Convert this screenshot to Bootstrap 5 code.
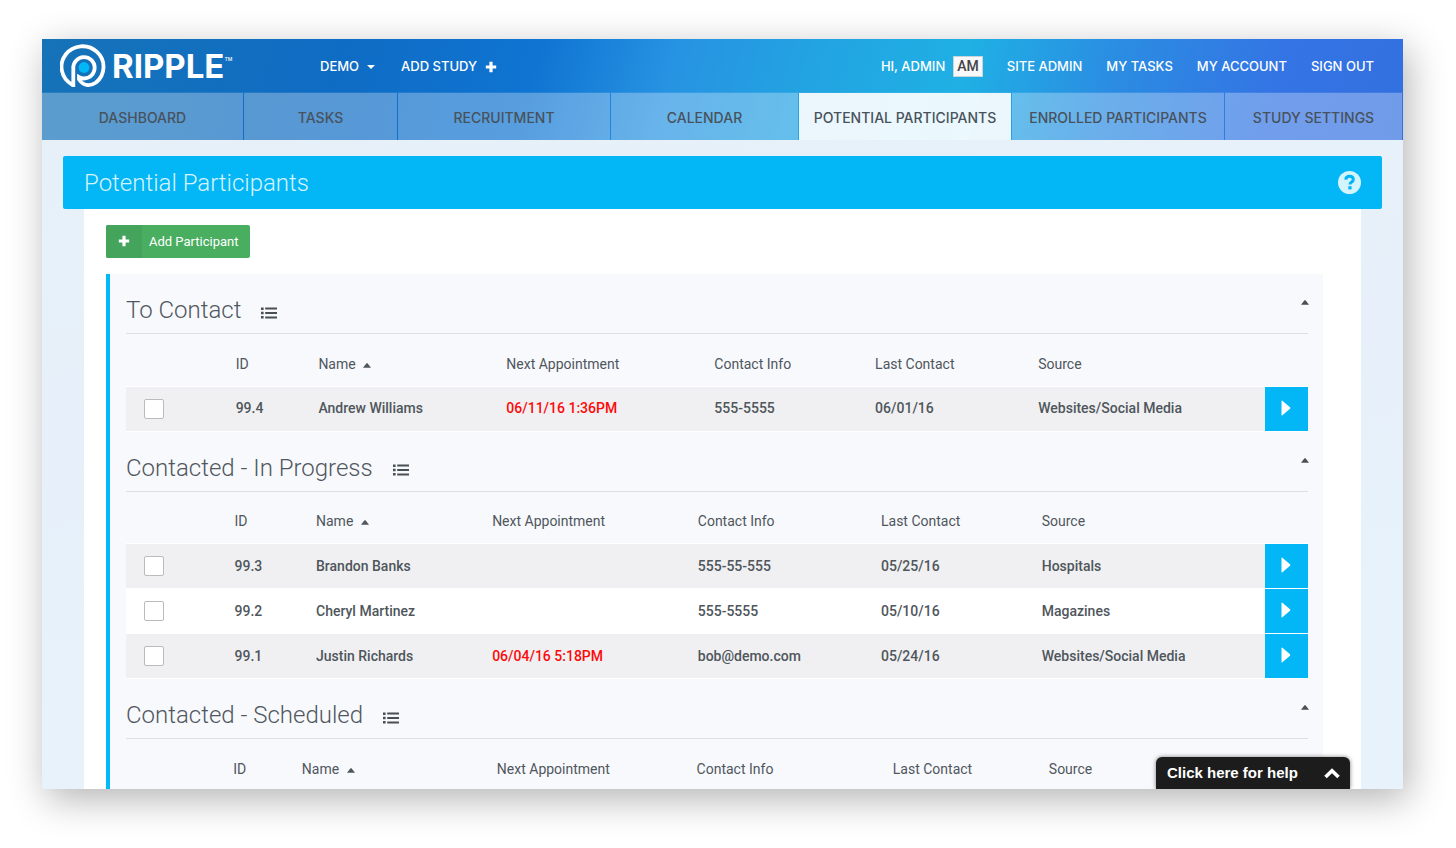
<!DOCTYPE html>
<html lang="en">
<head>
<meta charset="utf-8">
<meta name="viewport" content="width=device-width, initial-scale=1">
<title>Ripple - Potential Participants</title>
<link href="https://cdn.jsdelivr.net/npm/bootstrap@5.3.0/dist/css/bootstrap.min.css" rel="stylesheet">
<style>
  :root { --sky: #03b6f5; --ink: #4f565c; }
  body { font-family: Roboto, "Liberation Sans", sans-serif; font-size: 14px; color: var(--ink); background: #fff; }
  .stage { height: 100vh; padding: 39px 53px 59px 42px; }
  .app-window { background: linear-gradient(175deg, #e6eff7 0%, #e7f1f9 25%, #e7f0fa 45%, #e7f1fa 65%, #e7f2fb 80%); box-shadow: 5px 10px 36px rgba(0,0,0,.3); }
  .app-head { background: linear-gradient(105deg, #1673b8 0%, #0f6cc4 22%, #0f74d2 36%, #2793e2 46%, #22a5e2 57%, #1fb0e4 67%, #2b8ce2 78%, #3474e4 90%, #3370df 100%); }

  /* top bar */
  .topbar { height: 53px; padding: 2px 29px 0 18px; font-family: Inter, "Liberation Sans", sans-serif; font-size: 13px; font-weight: 500; }
  .topbar a { color: #fff; text-decoration: none; }
  .topbar .brand-word { font-size: 33px; font-weight: 700; line-height: 1; }
  .brand-tm { font-size: 5px; margin-top: 12px; }
  .brand { width: 191px; }
  .study-menu { margin-left: 69px; gap: 26px; }
  .user-menu { gap: 24px; }
  .initials { background: #f8f8fa; color: #444; border: 1px solid #c9d3da; height: 21px; padding: 0 3px; line-height: 19px; font-family: Roboto, sans-serif; font-size: 14px; }
  .tri-down { border: 4px solid transparent; border-top-color: #fff; border-bottom: 0; }

  /* section tabs */
  .tabs { display: grid; grid-template-columns: 202fr 154fr 213fr 188fr 213fr 213fr 178fr; height: 48px; }
  .tabs a { font-family: Inter, "Liberation Sans", sans-serif; font-size: 14px; font-weight: 500; color: #48525c; text-decoration: none; background: rgba(255,255,255,.3); background-clip: padding-box; border-right: 1px solid transparent; border-top: 1px solid rgba(255,255,255,.08); padding-top: 2px; white-space: nowrap; }
  .tabs a.active { background: rgba(255,255,255,.91); background-clip: padding-box; }

  /* page */
  .page { padding: 16px 21px 0; }
  .titlebar { background: var(--sky); height: 53px; padding: 0 21px; border-radius: 2px; }
  .titlebar h1 { font-size: 24px; font-weight: 300; color: #d5f3fe; padding-top: 2px; }
  .panel { margin: 0 21px; padding: 16px 38px 0 22px; }
  .btn-add { height: 33px; background: #4aae61; border-radius: 2px; color: #fff; font-size: 13px; overflow: hidden; }
  .btn-add:hover { background: #43a359; color: #fff; }
  .btn-add .plus-cell { width: 36px; background: #44a45b; padding-bottom: 2px; }
  .btn-add .txt { padding: 0 12px 0 7px; }
  .groups { margin-top: 16px; background: #f8f9fd; border-left: 4px solid #02b9f6; padding: 0 15px 0 16px; }
  .group-head { height: 60px; border-bottom: 1px solid #dcdfe4; padding-top: 14px; }
  .group-head h2 { font-size: 24px; font-weight: 300; color: #50575d; }
  .icon-btn { border: 0; background: none; padding: 0; color: #484f55; line-height: 0; }
  .collapse-btn { margin-right: -1px; }

  .plist { table-layout: fixed; width: 100%; }
  .plist th, .plist td { padding: 0 8px; white-space: nowrap; }
  .plist th { height: 52px; font-weight: 400; font-size: 14px; padding-top: 9px; }
  .plist td { height: 45px; font-weight: 500; font-size: 14px; border-bottom: 1px solid #fff; }
  .plist tbody tr:nth-child(odd) { background: #f0f0f2; }
  .plist tbody tr:nth-child(even) { background: #fff; }
  .plist tbody { border-top: 1px solid #fff; }
  .plist .due { color: #fd0a0a; }
  .plist td.go { padding: 0; }
  .go a { display: flex; height: 44px; background: var(--sky); align-items: center; justify-content: center; padding: 0 2px 2px 0; }
  .plist .form-check-input { width: 20px; height: 20px; margin: 0 0 0 10px; border: 1px solid #b9bbbe; border-radius: 2px; display: block; }
  col.c-go { width: 43px; }
  .t1 .c-sel { width: 8.6%; } .t1 .c-id { width: 7%; } .t1 .c-name { width: 15.9%; } .t1 .c-next { width: 17.6%; } .t1 .c-info { width: 13.6%; } .t1 .c-last { width: 13.8%; }
  .t2 .c-sel { width: 8.5%; } .t2 .c-id { width: 6.9%; } .t2 .c-name { width: 14.9%; } .t2 .c-next { width: 17.4%; } .t2 .c-info { width: 15.5%; } .t2 .c-last { width: 13.6%; }
  .t3 .c-sel { width: 8.4%; } .t3 .c-id { width: 5.8%; } .t3 .c-name { width: 16.5%; } .t3 .c-next { width: 16.9%; } .t3 .c-info { width: 16.6%; } .t3 .c-last { width: 13.2%; }

  .help-tab { right: 53px; bottom: 0; width: 194px; height: 32px; background: #1c1c1c; color: #fff; border: 0; border-radius: 6px 6px 0 0; padding: 1px 10px 0 11px; font-family: "Liberation Sans", sans-serif; font-weight: 700; font-size: 15px; box-shadow: 0 0 4px rgba(0,0,0,.5); clip-path: inset(-6px -6px 0 -6px); white-space: nowrap; }
</style>
</head>
<body>
<svg class="d-none" aria-hidden="true">
  <symbol id="i-plus" viewBox="0 0 12 12"><path d="M4.400 .8h3.200v3.600H11.200v3.200H7.600v3.600H4.400V7.600H.8V4.400h3.600z" fill="currentColor"/></symbol>
  <symbol id="i-list" viewBox="0 0 16 12"><path d="M0 .5h2.600v2.400H0zM0 4.800h2.600v2.400H0zM0 9.100h2.600v2.400H0zM4.200 .6H16v2H4.200zM4.200 5H16v2H4.200zM4.200 9.400H16v2H4.200z" fill="currentColor"/></symbol>
  <symbol id="i-up" viewBox="0 0 8 5"><path d="M0 4.800 3.500 .3h1L8 4.800z" fill="currentColor"/></symbol>
  <symbol id="i-go" viewBox="0 0 10 16"><path d="M.5 1.100Q.5 0 1.400 .7L9 7.300q.8 .7 0 1.400l-7.600 6.600Q.5 16 .5 14.900z" fill="#fff"/></symbol>
</svg>

<div class="stage">
  <div class="app-window h-100 position-relative d-flex flex-column">
    <header class="app-head flex-shrink-0">
      <nav class="topbar d-flex align-items-center" aria-label="Account">
        <a class="brand d-flex align-items-center" href="#" aria-label="Ripple">
          <svg width="48" height="46" viewBox="0 0 48 46" fill="none" stroke="#fff" aria-hidden="true">
            <path d="M13.300 43V24.500A10.700 10.700 0 1 1 24 34.500Q21 34.500 19 33.200V35.500C24 42.500 30.500 42.300 36 38.500A21 20.500 0 1 0 12 40.500" stroke-width="3.800"/>
            <circle cx="24" cy="23.500" r="5.400" fill="#03b6f5" stroke="none"/>
          </svg>
          <span class="brand-word ms-1">RIPPLE</span>
          <span class="brand-tm align-self-start">TM</span>
        </a>
        <div class="study-menu d-flex align-items-center">
          <a class="d-flex align-items-center gap-1" href="#">DEMO <span class="tri-down ms-1"></span></a>
          <a class="d-flex align-items-center gap-2" href="#">ADD STUDY <svg width="12" height="12"><use href="#i-plus"/></svg></a>
        </div>
        <div class="user-menu d-flex align-items-center ms-auto">
          <span class="text-white d-flex align-items-center gap-1">HI, ADMIN <span class="initials ms-1">AM</span></span>
          <a href="#">SITE ADMIN</a>
          <a href="#">MY TASKS</a>
          <a href="#">MY ACCOUNT</a>
          <a href="#">SIGN OUT</a>
        </div>
      </nav>
      <nav class="tabs" aria-label="Sections">
        <a class="d-flex align-items-center justify-content-center" href="#">DASHBOARD</a>
        <a class="d-flex align-items-center justify-content-center" href="#">TASKS</a>
        <a class="d-flex align-items-center justify-content-center" href="#">RECRUITMENT</a>
        <a class="d-flex align-items-center justify-content-center" href="#">CALENDAR</a>
        <a class="active d-flex align-items-center justify-content-center" href="#" aria-current="page">POTENTIAL PARTICIPANTS</a>
        <a class="d-flex align-items-center justify-content-center" href="#">ENROLLED PARTICIPANTS</a>
        <a class="d-flex align-items-center justify-content-center" href="#">STUDY SETTINGS</a>
      </nav>
    </header>

    <main class="page flex-fill overflow-hidden">
      <div class="titlebar d-flex align-items-center justify-content-between">
        <h1 class="m-0">Potential Participants</h1>
        <button class="icon-btn" type="button" aria-label="Help">
          <svg width="23" height="23" viewBox="0 0 23 23"><circle cx="11.500" cy="11.500" r="11.500" fill="#d3f3fe"/><path d="M7.700 8.600C8 6.200 9.500 5.300 11.500 5.300c2.300 0 3.800 1.300 3.800 3.100 0 2.700-3.300 2.500-3.300 5" fill="none" stroke="#03b6f5" stroke-width="3"/><path d="M10.300 15.200h3.300v3.200h-3.300z" fill="#03b6f5"/></svg>
        </button>
      </div>
      <div class="panel bg-white">
        <button class="btn btn-add border-0 p-0 d-inline-flex align-items-stretch" type="button">
          <span class="plus-cell d-flex align-items-center justify-content-center"><svg width="12" height="12"><use href="#i-plus"/></svg></span>
          <span class="txt d-flex align-items-center">Add Participant</span>
        </button>

        <div class="groups">
          <section>
            <div class="group-head d-flex align-items-center">
              <h2 class="m-0">To Contact</h2>
              <button class="icon-btn ms-3 mt-1 ps-1" type="button" aria-label="List options"><svg width="16" height="12"><use href="#i-list"/></svg></button>
              <button class="icon-btn collapse-btn ms-auto pb-3" type="button" aria-label="Collapse"><svg width="8" height="5"><use href="#i-up"/></svg></button>
            </div>
            <table class="plist t1">
              <colgroup><col class="c-sel"><col class="c-id"><col class="c-name"><col class="c-next"><col class="c-info"><col class="c-last"><col><col class="c-go"></colgroup>
              <thead><tr><th></th><th>ID</th><th>Name <svg class="ms-1" width="8" height="5"><use href="#i-up"/></svg></th><th>Next Appointment</th><th>Contact Info</th><th>Last Contact</th><th>Source</th><th></th></tr></thead>
              <tbody>
                <tr><td><input class="form-check-input" type="checkbox" aria-label="Select Andrew Williams"></td><td>99.4</td><td>Andrew Williams</td><td class="due">06/11/16 1:36PM</td><td>555-5555</td><td>06/01/16</td><td>Websites/Social Media</td><td class="go"><a href="#" aria-label="Open Andrew Williams"><svg width="10" height="16"><use href="#i-go"/></svg></a></td></tr>
              </tbody>
            </table>
          </section>

          <section>
            <div class="group-head d-flex align-items-center">
              <h2 class="m-0">Contacted - In Progress</h2>
              <button class="icon-btn ms-3 mt-1 ps-1" type="button" aria-label="List options"><svg width="16" height="12"><use href="#i-list"/></svg></button>
              <button class="icon-btn collapse-btn ms-auto pb-3" type="button" aria-label="Collapse"><svg width="8" height="5"><use href="#i-up"/></svg></button>
            </div>
            <table class="plist t2">
              <colgroup><col class="c-sel"><col class="c-id"><col class="c-name"><col class="c-next"><col class="c-info"><col class="c-last"><col><col class="c-go"></colgroup>
              <thead><tr><th></th><th>ID</th><th>Name <svg class="ms-1" width="8" height="5"><use href="#i-up"/></svg></th><th>Next Appointment</th><th>Contact Info</th><th>Last Contact</th><th>Source</th><th></th></tr></thead>
              <tbody>
                <tr><td><input class="form-check-input" type="checkbox" aria-label="Select Brandon Banks"></td><td>99.3</td><td>Brandon Banks</td><td></td><td>555-55-555</td><td>05/25/16</td><td>Hospitals</td><td class="go"><a href="#" aria-label="Open Brandon Banks"><svg width="10" height="16"><use href="#i-go"/></svg></a></td></tr>
                <tr><td><input class="form-check-input" type="checkbox" aria-label="Select Cheryl Martinez"></td><td>99.2</td><td>Cheryl Martinez</td><td></td><td>555-5555</td><td>05/10/16</td><td>Magazines</td><td class="go"><a href="#" aria-label="Open Cheryl Martinez"><svg width="10" height="16"><use href="#i-go"/></svg></a></td></tr>
                <tr><td><input class="form-check-input" type="checkbox" aria-label="Select Justin Richards"></td><td>99.1</td><td>Justin Richards</td><td class="due">06/04/16 5:18PM</td><td>bob@demo.com</td><td>05/24/16</td><td>Websites/Social Media</td><td class="go"><a href="#" aria-label="Open Justin Richards"><svg width="10" height="16"><use href="#i-go"/></svg></a></td></tr>
              </tbody>
            </table>
          </section>

          <section>
            <div class="group-head d-flex align-items-center">
              <h2 class="m-0">Contacted - Scheduled</h2>
              <button class="icon-btn ms-3 mt-1 ps-1" type="button" aria-label="List options"><svg width="16" height="12"><use href="#i-list"/></svg></button>
              <button class="icon-btn collapse-btn ms-auto pb-3" type="button" aria-label="Collapse"><svg width="8" height="5"><use href="#i-up"/></svg></button>
            </div>
            <table class="plist t3">
              <colgroup><col class="c-sel"><col class="c-id"><col class="c-name"><col class="c-next"><col class="c-info"><col class="c-last"><col><col class="c-go"></colgroup>
              <thead><tr><th></th><th>ID</th><th>Name <svg class="ms-1" width="8" height="5"><use href="#i-up"/></svg></th><th>Next Appointment</th><th>Contact Info</th><th>Last Contact</th><th>Source</th><th></th></tr></thead>
            </table>
          </section>
        </div>
      </div>
    </main>

    <button class="help-tab position-absolute d-flex align-items-center justify-content-between" type="button">Click here for help
      <svg width="16" height="11" viewBox="0 0 16 11" aria-hidden="true"><path d="M1.500 9 8 2.700 14.500 9" fill="none" stroke="#fff" stroke-width="3.600"/></svg>
    </button>
  </div>
</div>
<script src="https://cdn.jsdelivr.net/npm/bootstrap@5.3.0/dist/js/bootstrap.bundle.min.js"></script>
</body>
</html>
